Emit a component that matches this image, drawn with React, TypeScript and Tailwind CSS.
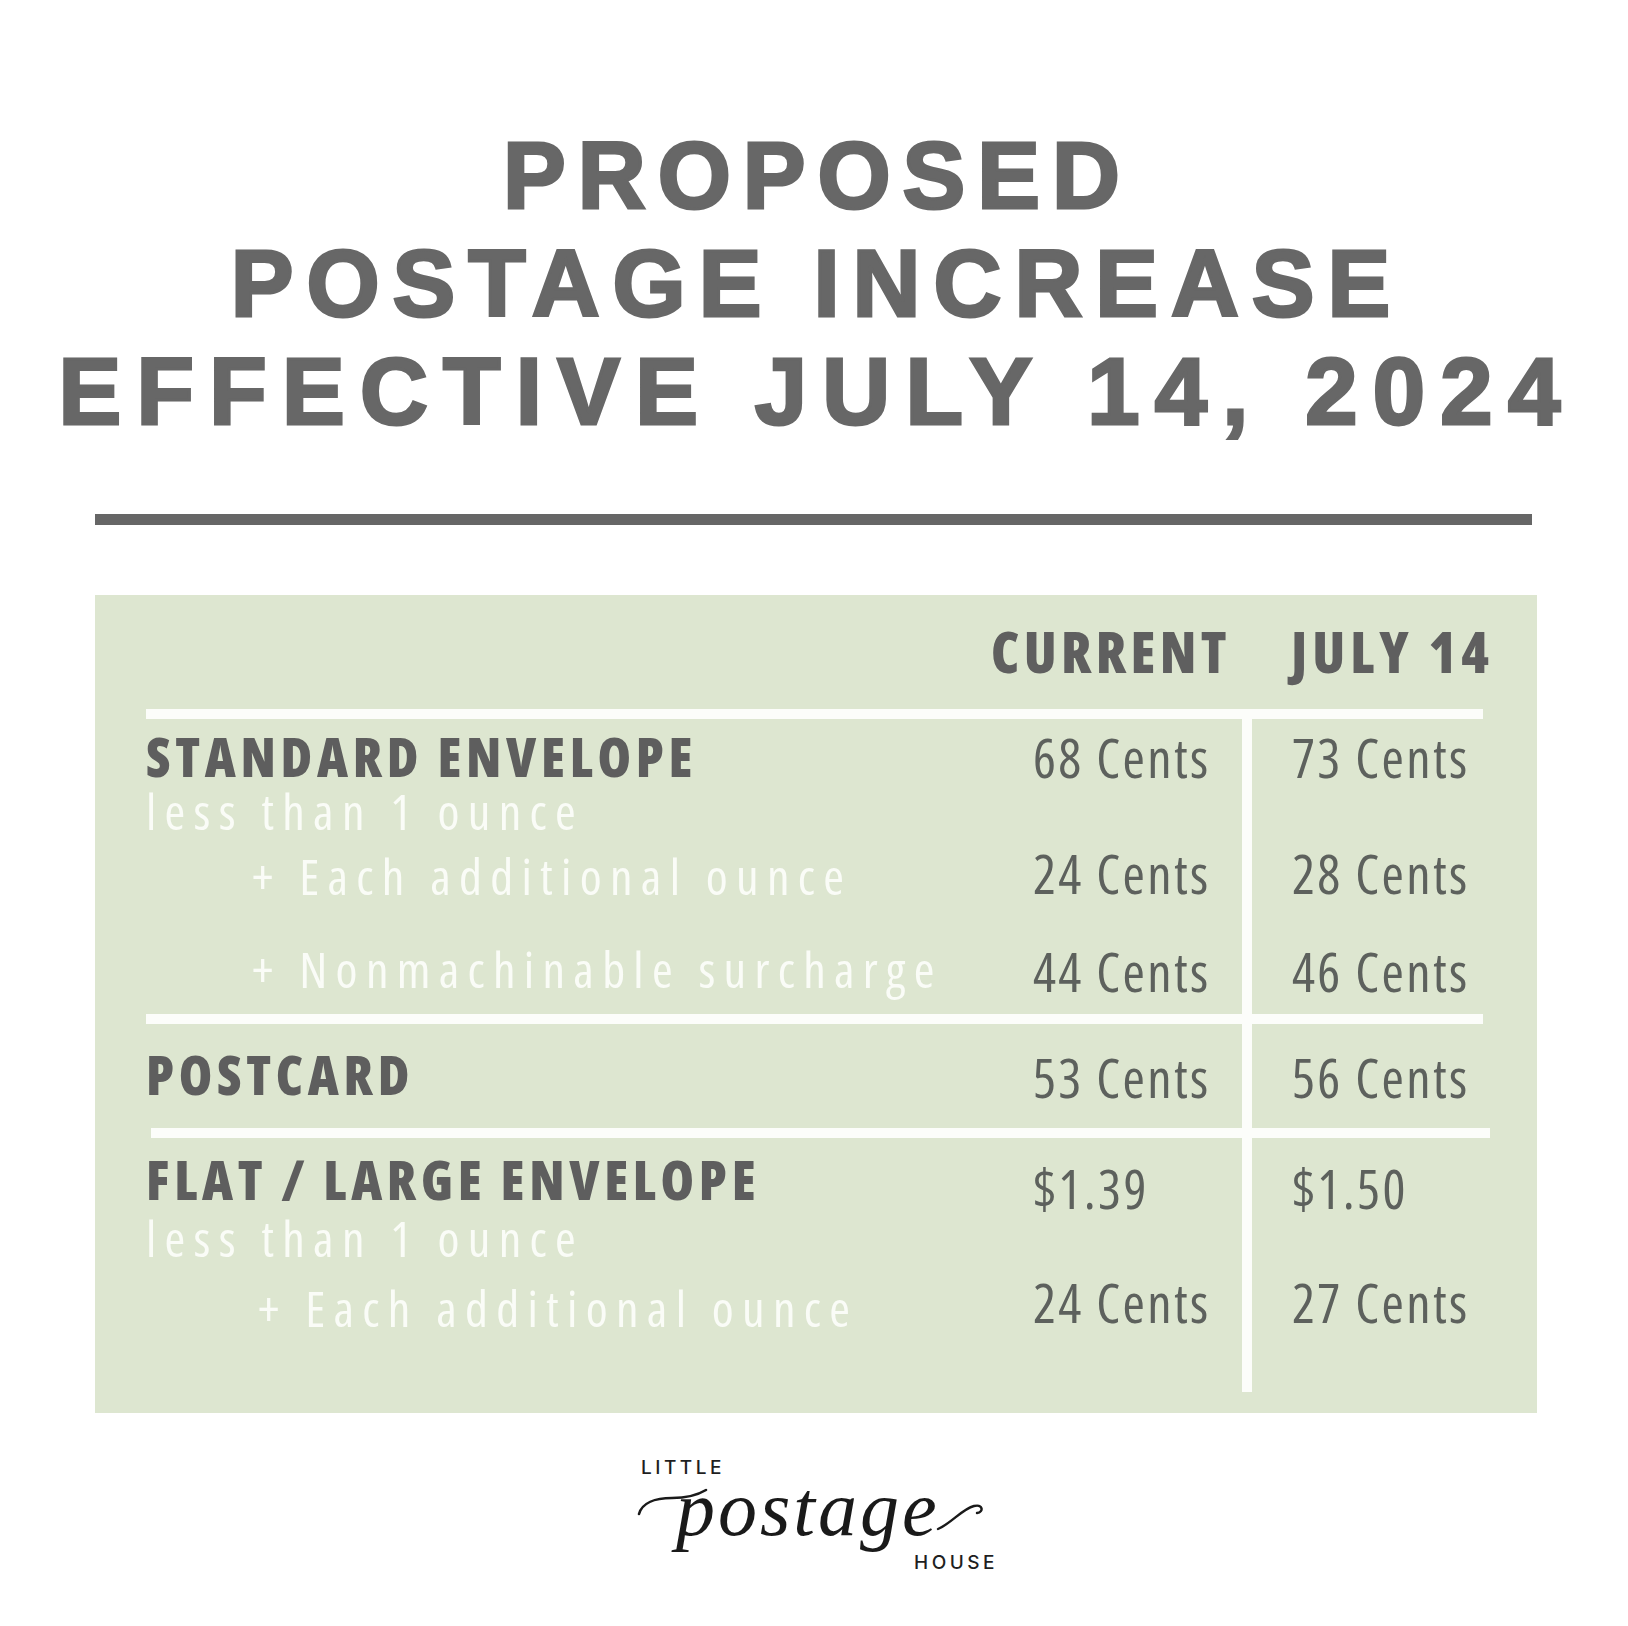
import React from "react";

const Rule = ({ extra = "" }: { extra?: string }) => (
  <div className={`h-[10px] bg-[#fcfdfa] ${extra}`} />
);

export default function App() {
  const grid = "grid grid-cols-[887px_209px_1fr] pl-[51px]";
  const label =
    "font-['Open_Sans',sans-serif] [font-stretch:75%] font-extrabold text-[54px] leading-none tracking-[4.7px] text-[#5e5e5e] whitespace-nowrap";
  const sub =
    "font-['Open_Sans',sans-serif] [font-stretch:75%] font-normal text-[50px] leading-none tracking-[8.3px] text-[#fafcf7] whitespace-nowrap";
  const val =
    "font-['Open_Sans',sans-serif] [font-stretch:75%] font-normal text-[54px] leading-none tracking-[2.4px] text-[#5d615d] whitespace-nowrap";
  const jcol = "border-l-[10px] border-[#fcfdfa] pl-[40px]";

  return (
    <div className="w-[1628px] h-[1626px] bg-white overflow-hidden">
      {/* Title */}
      <div className="pt-[122px] font-['Liberation_Sans',Arial,sans-serif] font-bold text-[94px] leading-[108px] text-[#676767] [-webkit-text-stroke:3px_#676767] text-center whitespace-nowrap">
        <div className="tracking-[12px] pl-[7px]">PROPOSED</div>
        <div className="tracking-[13px] pl-[6px]">POSTAGE INCREASE</div>
        <div className="tracking-[15.3px] pl-[6px]">EFFECTIVE JULY 14, 2024</div>
      </div>

      <div className="mt-[68px] ml-[95px] w-[1437px] h-[11px] bg-[#666666]" />

      {/* Green table */}
      <div className="mt-[70px] ml-[95px] w-[1442px] h-[818px] bg-[#dde6d0] pb-[21px]">
        {/* Header */}
        <div className="h-[114px] flex pl-[896px] font-['Open_Sans',sans-serif] [font-stretch:75%] font-extrabold text-[56px] leading-none tracking-[4.3px] text-[#5f5f5f] whitespace-nowrap">
          <div className="w-[300px] pt-[28px]">CURRENT</div>
          <div className="pt-[28px] tracking-[5px]">JULY 14</div>
        </div>
        <Rule extra="ml-[51px] w-[1337px]" />

        {/* Standard envelope */}
        <div className={`${grid} h-[60px]`}>
          <div className={`${label} pt-[10px]`}>STANDARD ENVELOPE</div>
          <div className={`${val} pt-[11px]`}>68 Cents</div>
          <div className={`${val} ${jcol} pt-[11px]`}>73 Cents</div>
        </div>
        <div className={`${grid} h-[49px]`}>
          <div className={`${sub} pt-[7px]`}>less than 1 ounce</div>
          <div />
          <div className={jcol} />
        </div>
        <div className={`${grid} h-[90px]`}>
          <div className={`${sub} pt-[23px] pl-[106px]`}>+ Each additional ounce</div>
          <div className={`${val} pt-[18px]`}>24 Cents</div>
          <div className={`${val} ${jcol} pt-[18px]`}>28 Cents</div>
        </div>
        <div className={`${grid} h-[96px]`}>
          <div className={`${sub} pt-[26px] pl-[106px]`}>+ Nonmachinable surcharge</div>
          <div className={`${val} pt-[26px]`}>44 Cents</div>
          <div className={`${val} ${jcol} pt-[26px]`}>46 Cents</div>
        </div>
        <Rule extra="ml-[51px] w-[1337px]" />

        {/* Postcard */}
        <div className={`${grid} h-[104px]`}>
          <div className={`${label} pt-[23px]`}>POSTCARD</div>
          <div className={`${val} pt-[26px]`}>53 Cents</div>
          <div className={`${val} ${jcol} pt-[26px]`}>56 Cents</div>
        </div>
        <Rule extra="ml-[56px] w-[1339px]" />

        {/* Flat */}
        <div className={`${grid} h-[67px]`}>
          <div className={`${label} pt-[14px]`}>FLAT / LARGE ENVELOPE</div>
          <div className={`${val} pt-[23px]`}>$1.39</div>
          <div className={`${val} ${jcol} pt-[23px]`}>$1.50</div>
        </div>
        <div className={`${grid} h-[53px]`}>
          <div className={`${sub} pt-[8px]`}>less than 1 ounce</div>
          <div />
          <div className={jcol} />
        </div>
        <div className={`${grid} h-[94px]`}>
          <div className={`${sub} pt-[25px] pl-[112px]`}>+ Each additional ounce</div>
          <div className={`${val} pt-[17px]`}>24 Cents</div>
          <div className={`${val} ${jcol} pt-[17px]`}>27 Cents</div>
        </div>
        <div className={`${grid} h-[40px]`}>
          <div />
          <div />
          <div className={jcol} />
        </div>
      </div>

      {/* Logo */}
      <div className="mt-[23px] ml-[600px] w-[420px] h-[160px]">
        <svg width="420" height="160" viewBox="0 0 420 160">
          <text
            x="41"
            y="38"
            fontFamily="Inter, 'Liberation Sans', sans-serif"
            fontWeight="500"
            fontSize="19"
            letterSpacing="3.5"
            fill="#1f1f1f"
          >
            LITTLE
          </text>
          <text
            x="76"
            y="99"
            fontFamily="'Liberation Serif', serif"
            fontStyle="italic"
            fontSize="78"
            letterSpacing="3"
            fill="#1a1a1a"
          >
            postage
          </text>
          <text
            x="314"
            y="133"
            fontFamily="Inter, 'Liberation Sans', sans-serif"
            fontWeight="500"
            fontSize="19"
            letterSpacing="3.5"
            fill="#1f1f1f"
          >
            HOUSE
          </text>
          <path
            d="M39,78 C42,67 55,62 72,62 C86,62 96,60 106,54"
            fill="none"
            stroke="#1a1a1a"
            strokeWidth="2.6"
            strokeLinecap="round"
          />
          <path
            d="M338,93 C352,87 362,73 374,70 C383,68 384,76 377,77"
            fill="none"
            stroke="#1a1a1a"
            strokeWidth="2.4"
            strokeLinecap="round"
          />
        </svg>
      </div>
    </div>
  );
}
